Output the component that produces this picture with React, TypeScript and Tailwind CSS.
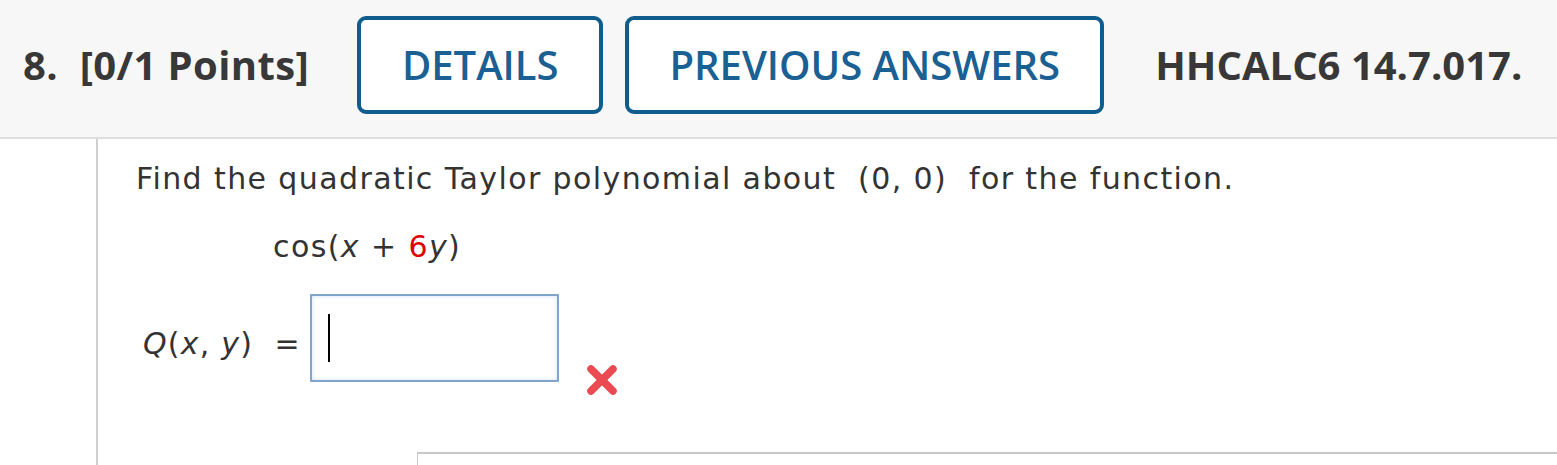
import React from "react";

const sans = { fontFamily: '"DejaVu Sans", Verdana, sans-serif' };

function WrongMark() {
  return (
    <svg width="34" height="34" viewBox="0 0 34 34" className="block">
      <g stroke="#ea4a52" strokeWidth="7.5" strokeLinecap="round">
        <line x1="6" y1="6" x2="28" y2="28" />
        <line x1="28" y1="6" x2="6" y2="28" />
      </g>
    </svg>
  );
}

export default function App() {
  return (
    <div className="w-[1557px] h-[465px] overflow-hidden bg-white">
      <header className="flex h-[139px] items-center border-b-2 border-[#dedede] bg-[#f7f7f7] pb-[8px] pl-[23px] font-['Open_Sans',sans-serif] font-semibold">
        <span className="whitespace-pre text-[40px] font-bold tracking-[0.4px] text-[#383838]">8.  [0/1 Points]</span>
        <button
          type="button"
          className="ml-[48px] flex h-[98px] w-[246px] items-center justify-center rounded-[9px] border-4 border-[#0f5d8c] bg-white text-[40px] text-[#1a6092]"
        >
          DETAILS
        </button>
        <button
          type="button"
          className="ml-[22px] flex h-[98px] w-[479px] items-center justify-center rounded-[9px] border-4 border-[#0f5d8c] bg-white text-[40px] text-[#1a6092]"
        >
          PREVIOUS ANSWERS
        </button>
        <span className="ml-[51px] text-[40px] font-bold text-[#383838]">HHCALC6 14.7.017.</span>
      </header>

      <div className="ml-[96px] h-[326px] border-l-2 border-[#cfcfcf] text-[#333]" style={sans}>
        <div className="pl-[38px] pt-[22px] tracking-[1.4px]">
          <p className="whitespace-pre text-[30px] leading-[36px]">
            Find the quadratic Taylor polynomial about  (0, 0)  for the function.
          </p>
          <p className="mt-[32px] pl-[137px] text-[30px] leading-[36px]">
            cos(<i>x</i> + <span className="text-[#e00000]">6</span><i>y</i>)
          </p>
          <div className="mt-[29px] flex items-start">
            <span className="mt-[32px] pl-[7px] text-[30px] leading-[36px] tracking-[1.2px] whitespace-pre">
              <i>Q</i>(<i>x</i>, <i>y</i>)  =
            </span>
            <div className="ml-[9px] flex h-[88px] w-[249px] items-center rounded-[1px] border-2 border-[#80a4cb] bg-white pl-[16px] shadow-[inset_0_0_4px_#cfe2f6]">
              <span className="block h-[48px] w-[2px] bg-black" />
            </div>
            <div className="ml-[26px] mt-[69px]">
              <WrongMark />
            </div>
          </div>
        </div>
        <div className="ml-[319px] mt-[55px] h-[40px] border-l border-t-2 border-[#c8c8c8]" />
      </div>
    </div>
  );
}
